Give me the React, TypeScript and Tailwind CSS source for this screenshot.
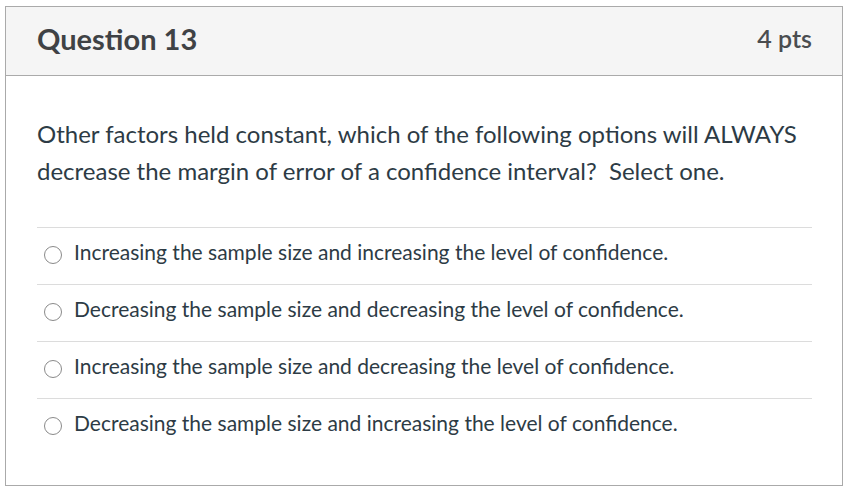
import React from "react";

const options = [
  "Increasing the sample size and increasing the level of confidence.",
  "Decreasing the sample size and decreasing the level of confidence.",
  "Increasing the sample size and decreasing the level of confidence.",
  "Decreasing the sample size and increasing the level of confidence.",
];

export default function App() {
  return (
    <div className="w-[848px] h-[491px] bg-white pl-[5px] pr-[5px] pt-[6px] pb-[5px]" style={{ fontFamily: "Lato, 'Open Sans', sans-serif" }}>
      <div className="h-[480px] border border-[#aaaaaa] flex flex-col text-[#2d3b45]">
        <div className="h-[69px] bg-[#f5f5f5] border-b border-[#aaaaaa] flex items-center justify-between pl-[31px] pr-[30px] pb-[4px] shrink-0">
          <div className="text-[29px] font-bold text-[#3f4245]">Question 13</div>
          <div className="text-[25px] font-semibold text-[#4a4d50]">4 pts</div>
        </div>
        <div className="pl-[31px] pr-[30px] pt-[39px]">
          <p className="text-[24px] leading-[37px] text-[#2d3b45]">
            Other factors held constant, which of the following options will ALWAYS decrease the margin of error of a confidence interval?&nbsp; Select one.
          </p>
          <div className="mt-[38px]">
            {options.map((o) => (
              <div key={o} className="border-t border-[#dcdcdc] h-[57px] flex items-center pb-[8px]">
                <span className="w-[18px] h-[18px] rounded-full border border-[#8a8a8a] bg-white ml-[7px] mt-[5px] shrink-0" />
                <span className="ml-[12px] text-[21px] text-[#2d3b45]">{o}</span>
              </div>
            ))}
          </div>
        </div>
      </div>
    </div>
  );
}
